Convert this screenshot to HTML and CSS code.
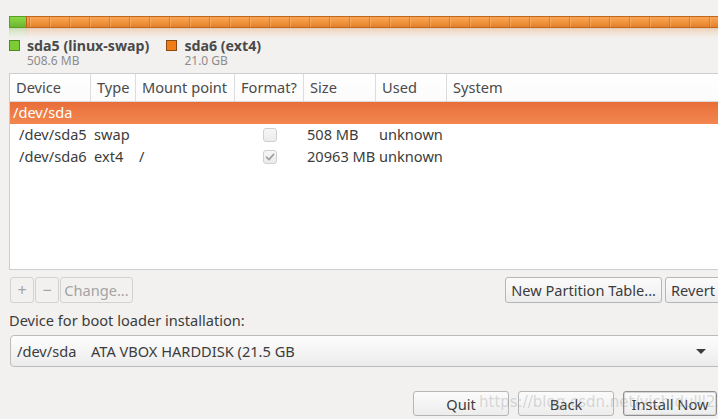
FILE: index.html
```html
<!DOCTYPE html>
<html>
<head>
<meta charset="utf-8">
<link rel="stylesheet" href="styles.css">
</head>
<body>
<div class="page">
  <div class="bar">
    <div class="seg seg-swap"></div>
    <div class="seg seg-ext4"></div>
  </div>

  <div class="legend">
    <div class="legend-item">
      <span class="swatch swatch-green"></span>
      <div class="legend-text">
        <div class="legend-name">sda5 (linux-swap)</div>
        <div class="legend-size">508.6 MB</div>
      </div>
    </div>
    <div class="legend-item">
      <span class="swatch swatch-orange"></span>
      <div class="legend-text">
        <div class="legend-name">sda6 (ext4)</div>
        <div class="legend-size">21.0 GB</div>
      </div>
    </div>
  </div>

  <div class="table">
    <div class="row head">
      <div class="cell">Device</div>
      <div class="cell">Type</div>
      <div class="cell">Mount point</div>
      <div class="cell">Format?</div>
      <div class="cell">Size</div>
      <div class="cell">Used</div>
      <div class="cell">System</div>
    </div>
    <div class="row sel">
      <div class="cell">/dev/sda</div>
      <div class="cell"></div>
      <div class="cell"></div>
      <div class="cell"></div>
      <div class="cell"></div>
      <div class="cell"></div>
      <div class="cell"></div>
    </div>
    <div class="row data">
      <div class="cell dev">/dev/sda5</div>
      <div class="cell">swap</div>
      <div class="cell"></div>
      <div class="cell center"><span class="check"></span></div>
      <div class="cell">508 MB</div>
      <div class="cell">unknown</div>
      <div class="cell"></div>
    </div>
    <div class="row data">
      <div class="cell dev">/dev/sda6</div>
      <div class="cell">ext4</div>
      <div class="cell">/</div>
      <div class="cell center"><span class="check checked"><svg viewBox="0 0 14 14" width="14" height="14"><path d="M3.5 7.2 L6 9.6 L10.6 4.4" fill="none" stroke="#a3a3a3" stroke-width="1.8" stroke-linecap="round" stroke-linejoin="round"/></svg></span></div>
      <div class="cell">20963 MB</div>
      <div class="cell">unknown</div>
      <div class="cell"></div>
    </div>
  </div>

  <div class="toolbar">
    <div class="tool-left">
      <button class="btn disabled icon-btn">+</button>
      <button class="btn disabled icon-btn">−</button>
      <button class="btn disabled change-btn">Change...</button>
    </div>
    <div class="tool-right">
      <button class="btn">New Partition Table...</button>
      <button class="btn">Revert</button>
    </div>
  </div>

  <div class="label">Device for boot loader installation:</div>

  <div class="combo">
    <span class="combo-dev">/dev/sda</span>
    <span class="combo-desc">ATA VBOX HARDDISK (21.5 GB</span>
    <span class="combo-arrow"></span>
  </div>

  <div class="actions">
    <button class="btn act">Quit</button>
    <button class="btn act">Back</button>
    <button class="btn act default">Install Now</button>
    <span class="watermark">https://blog.csdn.net/yichidulll23</span>
  </div>
</div>
</body>
</html>
```

FILE: styles.css
```css
html, body {
  margin: 0;
  padding: 0;
  background: #f2f1f0;
  overflow: hidden;
}

body {
  font-family: "Noto Sans", "Open Sans", "DejaVu Sans", sans-serif;
  font-size: 14.6px;
  color: #3c3c3c;
}

.page {
  width: 718px;
  padding: 16px 0 0 9px;
  height: 419px;
  box-sizing: border-box;
}

/* partition bar */
.bar {
  display: flex;
  height: 12px;
  margin-right: -20px;
  -webkit-box-reflect: below 0 linear-gradient(to bottom, transparent 15%, rgba(0,0,0,0.28));
}

.seg {
  height: 12px;
  box-sizing: border-box;
}

.seg-swap {
  width: 17px;
  border: 1px solid #5c9e25;
  border-right: none;
  background: linear-gradient(to bottom, #8ad845 0%, #7cc93a 50%, #6bb42e 100%);
}

.seg-ext4 {
  flex: 1;
  border: 1px solid #c2651e;
  border-left: 1px solid #b9611f;
  background:
    repeating-linear-gradient(to right, transparent 0, transparent 2px, rgba(190, 100, 30, 0.55) 2px, rgba(190, 100, 30, 0.55) 3px, rgba(255, 200, 140, 0.4) 3px, rgba(255, 200, 140, 0.4) 4px, transparent 4px, transparent 20px),
    linear-gradient(to bottom, #f7a352 0%, #f3953f 50%, #e2812c 100%);
}

/* legend */
.legend {
  display: flex;
  gap: 17px;
  margin-top: 9px;
}

.legend-item {
  display: flex;
  gap: 7px;
  align-items: flex-start;
}

.swatch {
  width: 11px;
  height: 11px;
  margin-top: 3px;
  box-sizing: border-box;
}

.swatch-green {
  background: #7ccc35;
  border: 1px solid #4e8a20;
}

.swatch-orange {
  background: #f07d17;
  border: 1px solid #8a4a14;
}

.legend-name {
  font-weight: bold;
  font-size: 14.2px;
  line-height: 17px;
  color: #4a4a4a;
}

.legend-size {
  font-size: 12px;
  line-height: 13px;
  color: #8c8c8c;
}

/* table */
.table {
  margin-top: 6px;
  margin-right: -30px;
  height: 197px;
  box-sizing: border-box;
  background: #ffffff;
  border: 1px solid #cdcdcd;
  border-right: none;
}

.row {
  display: grid;
  grid-template-columns: 81px 45px 99px 69px 72px 71px 1fr;
}

.head {
  height: 28px;
  border-bottom: 1px solid #dadada;
  box-sizing: border-box;
  background: linear-gradient(to bottom, #ffffff, #fbfbfb);
  color: #4a4a4a;
}

.head .cell {
  border-right: 1px solid #dcdcdc;
  padding-left: 6px;
  line-height: 26px;
}

.head .cell:last-child {
  border-right: none;
}

.cell {
  box-sizing: border-box;
  white-space: nowrap;
  overflow: hidden;
}

.sel {
  height: 22px;
  background: linear-gradient(to bottom, #e76d39 0%, #ee7b45 50%, #f3864f 100%);
  color: #ffffff;
}

.sel .cell {
  line-height: 21px;
  padding-left: 3px;
}

.data {
  height: 22px;
}

.data .cell {
  line-height: 21px;
  padding-left: 3px;
}

.data .cell.dev {
  padding-left: 9px;
}

.data .cell.center {
  display: flex;
  justify-content: center;
  align-items: center;
  padding-left: 0;
}

.check {
  display: block;
  width: 14px;
  height: 14px;
  box-sizing: border-box;
  border: 1px solid #cfcfcf;
  border-radius: 3px;
  background: linear-gradient(to bottom, #f6f6f6, #ebebeb);
  position: relative;
}

.check svg {
  position: absolute;
  left: -1px;
  top: -1px;
}

/* toolbar */
.toolbar {
  display: flex;
  justify-content: space-between;
  align-items: center;
  margin-top: 7px;
  margin-right: -3px;
}

.tool-left,
.tool-right {
  display: flex;
  gap: 1px;
}

.tool-left {
  margin-left: 1px;
}

.tool-right {
  gap: 3px;
}

.btn {
  font-family: inherit;
  font-size: 14.6px;
  color: #3c3c3c;
  height: 26px;
  padding: 0 5px;
  border: 1px solid #b6b6b6;
  border-radius: 3px;
  background: linear-gradient(to bottom, #fbfbfb 0%, #f3f3f3 60%, #ececec 100%);
  box-sizing: border-box;
  line-height: 22px;
  margin: 0;
}

.btn.disabled {
  color: #a3a3a3;
  border-color: #d2d2d2;
  background: #f2f1f0;
}

.icon-btn {
  width: 24px;
  padding: 0;
  font-size: 16px;
}

.change-btn {
  width: 73px;
  padding: 0;
}

/* boot loader */
.label {
  margin-top: 8px;
  line-height: 18px;
}

.combo {
  display: flex;
  align-items: center;
  margin-top: 6px;
  margin-left: 1px;
  margin-right: -5px;
  height: 32px;
  box-sizing: border-box;
  border: 1px solid #bcbcbc;
  border-radius: 4px;
  background: linear-gradient(to bottom, #fdfdfd 0%, #f3f3f3 60%, #ebebeb 100%);
  padding-left: 6px;
}

.combo-dev {
  width: 74px;
}

.combo-desc {
  flex: 1;
}

.combo-arrow {
  width: 0;
  height: 0;
  border-left: 5px solid transparent;
  border-right: 5px solid transparent;
  border-top: 5px solid #3c3c3c;
  margin-right: 16px;
}

/* actions */
.actions {
  position: relative;
  display: flex;
  justify-content: flex-end;
  gap: 9px;
  margin-top: 24px;
  margin-right: 1px;
}

.btn.act {
  width: 96px;
  height: 25px;
}

.btn.act.default {
  width: 94px;
  border-color: #8e8e8e;
  box-shadow: inset 0 0 0 1px #d6d6d6;
}

.watermark {
  position: absolute;
  left: 470px;
  top: 2px;
  font-family: "DejaVu Sans", sans-serif;
  font-size: 15px;
  color: rgba(150, 150, 150, 0.35);
  pointer-events: none;
  white-space: nowrap;
}
```
